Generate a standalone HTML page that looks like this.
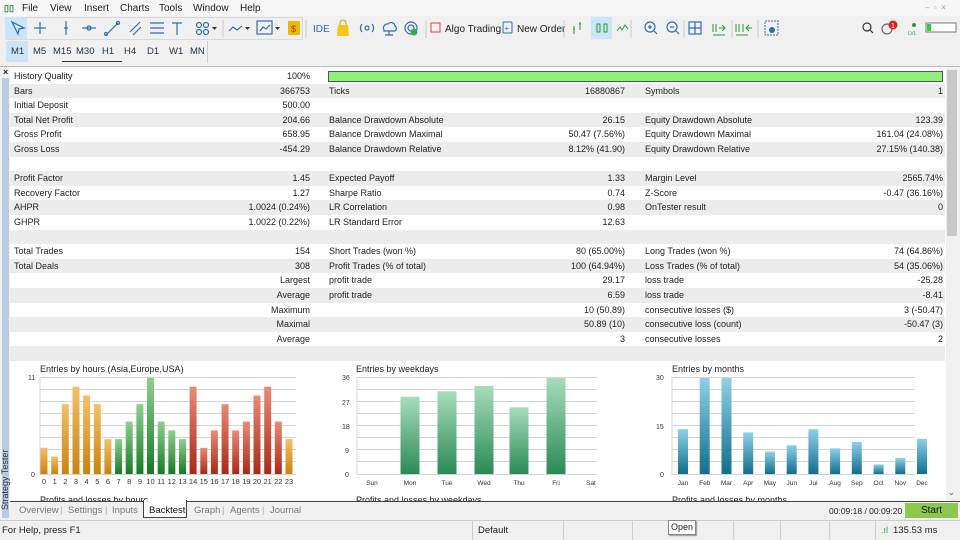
<!DOCTYPE html>
<html><head><meta charset="utf-8"><style>
*{margin:0;padding:0;box-sizing:border-box}
body{width:960px;height:540px;overflow:hidden;background:#f0f0f0;font-family:"Liberation Sans",sans-serif;font-size:9px;color:#222;position:relative}
.a{position:absolute}
.menu span{position:absolute;top:3px;font-size:10px}
.tf span{position:absolute;top:46px;font-size:9.5px;color:#234}
.row{position:absolute;left:10px;width:935px;height:14.6px;line-height:14.6px;background:#fff}
.row.g{background:#ececec}
.row span{position:absolute;white-space:nowrap}
.l1{left:4px}.v1{right:635px;text-align:right}.l2{left:319px}.v2{right:320px;text-align:right}.l3{left:635px}.v3{right:2px;text-align:right}
.tabs span{position:absolute;top:505px;font-size:9.5px;color:#777}
svg text{font-family:"Liberation Sans",sans-serif}
</style></head><body>
<div class="a" style="left:0;top:0;width:960px;height:16px;background:#f7f7f7"></div>
<div class="menu">
<span style="left:4px;color:#2a8a3a;font-weight:bold;font-size:9px">▯▯</span>
<span style="left:22px">File</span><span style="left:50px">View</span><span style="left:84px">Insert</span><span style="left:120px">Charts</span><span style="left:159px">Tools</span><span style="left:193px">Window</span><span style="left:240px">Help</span>
<span style="left:925px;color:#999;font-size:8px">–&nbsp; ▫&nbsp; ×</span>
</div>
<div class="a" style="left:6px;top:17px;width:297px;height:23px;border:1px solid #d8d8d8"></div>
<div class="a" style="left:5px;top:17px;width:22px;height:22px;background:#cce4f7"></div>
<svg class="a" style="left:0;top:16px" width="960" height="24" viewBox="0 16 960 24">
<g fill="none" stroke="#2f6db3" stroke-width="1.2">
<path d="M12 22 l6 12 l1-5 l5-1z"/>
<path d="M40 22v12M34 28h12"/>
<path d="M66 21v14M64 28h4"/>
<path d="M82 28h14"/><circle cx="89" cy="28" r="2"/>
<path d="M106 35l12-12"/><circle cx="106" cy="34" r="1.5"/><circle cx="118" cy="23" r="1.5"/>
<path d="M130 32l10-10M133 35l8-8"/>
<path d="M150 23h14M150 28h14M150 33h14"/>
<path d="M172 23h10M177 23v12"/>
<circle cx="199" cy="25" r="2.5"/><circle cx="206" cy="25" r="2.5"/><circle cx="199" cy="32" r="2.5"/><circle cx="206" cy="32" r="2.5"/>
<path d="M229 31l4-4 4 3 5-4"/>
<rect x="257" y="21" width="15" height="13"/>
<path d="M260 31l3-4 3 2 4-4"/>
</g>
<path d="M212 27h5l-2.5 3z M245 27h5l-2.5 3z M275 27h5l-2.5 3z" fill="#333"/>
<rect x="288" y="21" width="12" height="14" fill="#f2b600" rx="1"/><text x="291" y="32" font-size="9" fill="#7a5500">$</text>
<text x="313" y="32" font-size="10" fill="#2f6db3">IDE</text>
<path d="M338 25h10l1 11h-12z" fill="#f5c518"/><path d="M340 25v-2a3 3 0 0 1 6 0v2" stroke="#d19c00" fill="none"/>
<g fill="none" stroke="#2f6db3" stroke-width="1.2"><circle cx="367" cy="28" r="2"/><path d="M362 24a6 6 0 0 0 0 8M372 24a6 6 0 0 1 0 8"/>
<path d="M384 30a4 4 0 0 1 4-6a4 4 0 0 1 7 2a3 3 0 0 1 0 5h-11zM389 31v4M385 35h8"/>
<circle cx="411" cy="28" r="6"/><circle cx="411" cy="28" r="3"/></g>
<circle cx="414" cy="32" r="3.5" fill="#3aaa50"/>
<rect x="431" y="23" width="9" height="9" fill="none" stroke="#d04a4a"/>
<text x="445" y="32" font-size="10" fill="#222">Algo Trading</text>
<rect x="503" y="22" width="9" height="11" fill="none" stroke="#2f6db3" rx="1"/><text x="504.5" y="31" font-size="8" fill="#2f6db3">+</text>
<text x="517" y="32" font-size="10" fill="#222">New Order</text>
<path d="M574 34v-8M573 29h2M580 30v-8M579 24h2" stroke="#2a9a3a"/>
<rect x="591" y="17" width="21" height="22" fill="#cce4f7"/>
<path d="M597 24h3v8h-3zM604 24h3v8h-3z" stroke="#2a9a3a" fill="none"/>
<path d="M617 31l3-4 2 3 3-5 3 4" stroke="#2a9a3a" fill="none"/>
<g fill="none" stroke="#2f6db3" stroke-width="1.2"><circle cx="650" cy="27" r="5"/><path d="M654 31l3 3M648 27h4M650 25v4"/>
<circle cx="672" cy="27" r="5"/><path d="M676 31l3 3M670 27h4"/>
<rect x="689" y="22" width="12" height="12"/><path d="M695 22v12M689 28h12"/></g>
<path d="M713 24v8M716 24v8M719 28h6M722 25l3 3-3 3M713 35h12" stroke="#2a9a3a" fill="none"/>
<path d="M736 24v8M739 24v8M743 24v8M752 28h-6M749 25l-3 3 3 3M736 35h12" stroke="#2a9a3a" fill="none"/>
<rect x="765" y="21" width="13" height="14" fill="none" stroke="#2f6db3" stroke-dasharray="2 1"/><circle cx="772" cy="30" r="3" fill="#2f6db3"/>
<path d="M564 20v18M631 20v18M684 20v18M732 20v18M758 20v18M306 20v18M426 20v18M223 20v18" stroke="#ccc"/>
<circle cx="867" cy="27" r="4" fill="none" stroke="#333" stroke-width="1.2"/><path d="M870 30l3 3" stroke="#333" stroke-width="1.2"/>
<circle cx="887" cy="29" r="5" fill="none" stroke="#555"/><circle cx="893" cy="25" r="4.5" fill="#d22"/><text x="891" y="28" font-size="7" fill="#fff">1</text>
<text x="908" y="35" font-size="5" fill="#2a9a3a">LVL</text><circle cx="914" cy="25" r="2" fill="#2a9a3a"/>
<rect x="926" y="23" width="30" height="9" fill="#fff" stroke="#777"/><rect x="927" y="24" width="4" height="7" fill="#3c3"/>
</svg>
<div class="a" style="left:6px;top:41px;width:202px;height:22px;border-right:1px solid #ccc"></div>
<div class="a" style="left:6px;top:41px;width:22px;height:21px;background:#cce4f7"></div>
<div class="a" style="left:62px;top:61px;width:60px;height:1px;background:#333"></div>
<div class="tf"><span style="left:11px">M1</span><span style="left:33px">M5</span><span style="left:53px">M15</span><span style="left:76px">M30</span><span style="left:102px">H1</span><span style="left:124px">H4</span><span style="left:147px">D1</span><span style="left:169px">W1</span><span style="left:190px">MN</span></div>
<div class="a" style="left:0;top:66px;width:960px;height:1px;background:#bbb"></div>
<div class="a" style="left:0;top:67px;width:10px;height:453px;background:#f0f0f0"></div>
<div class="a" style="left:2px;top:78px;width:7px;height:440px;background:#b8cde4"></div>
<div class="a" style="left:3px;top:67px;font-size:9px;font-weight:bold">×</div>
<div class="a" style="left:-30px;top:470px;width:70px;transform:rotate(-90deg);font-size:9px;color:#333">Strategy Tester</div>
<div class="a" style="left:10px;top:67px;width:936px;height:435px;background:#fff"></div>
<div class="row" style="top:69px"><span class="l1">History Quality</span><span class="v1">100%</span><span class="a" style="left:318px;top:2px;width:615px;height:11px;background:#8ff07a;border:1px solid #555"></span></div>
<div class="row g" style="top:83.6px"><span class="l1">Bars</span><span class="v1">366753</span><span class="l2">Ticks</span><span class="v2">16880867</span><span class="l3">Symbols</span><span class="v3">1</span></div>
<div class="row" style="top:98.2px"><span class="l1">Initial Deposit</span><span class="v1">500.00</span></div>
<div class="row g" style="top:112.8px"><span class="l1">Total Net Profit</span><span class="v1">204.66</span><span class="l2">Balance Drawdown Absolute</span><span class="v2">26.15</span><span class="l3">Equity Drawdown Absolute</span><span class="v3">123.39</span></div>
<div class="row" style="top:127.4px"><span class="l1">Gross Profit</span><span class="v1">658.95</span><span class="l2">Balance Drawdown Maximal</span><span class="v2">50.47 (7.56%)</span><span class="l3">Equity Drawdown Maximal</span><span class="v3">161.04 (24.08%)</span></div>
<div class="row g" style="top:142px"><span class="l1">Gross Loss</span><span class="v1">-454.29</span><span class="l2">Balance Drawdown Relative</span><span class="v2">8.12% (41.90)</span><span class="l3">Equity Drawdown Relative</span><span class="v3">27.15% (140.38)</span></div>
<div class="row" style="top:156.6px"></div>
<div class="row g" style="top:171.2px"><span class="l1">Profit Factor</span><span class="v1">1.45</span><span class="l2">Expected Payoff</span><span class="v2">1.33</span><span class="l3">Margin Level</span><span class="v3">2565.74%</span></div>
<div class="row" style="top:185.8px"><span class="l1">Recovery Factor</span><span class="v1">1.27</span><span class="l2">Sharpe Ratio</span><span class="v2">0.74</span><span class="l3">Z-Score</span><span class="v3">-0.47 (36.16%)</span></div>
<div class="row g" style="top:200.4px"><span class="l1">AHPR</span><span class="v1">1.0024 (0.24%)</span><span class="l2">LR Correlation</span><span class="v2">0.98</span><span class="l3">OnTester result</span><span class="v3">0</span></div>
<div class="row" style="top:215px"><span class="l1">GHPR</span><span class="v1">1.0022 (0.22%)</span><span class="l2">LR Standard Error</span><span class="v2">12.63</span></div>
<div class="row g" style="top:229.6px"></div>
<div class="row" style="top:244.2px"><span class="l1">Total Trades</span><span class="v1">154</span><span class="l2">Short Trades (won %)</span><span class="v2">80 (65.00%)</span><span class="l3">Long Trades (won %)</span><span class="v3">74 (64.86%)</span></div>
<div class="row g" style="top:258.8px"><span class="l1">Total Deals</span><span class="v1">308</span><span class="l2">Profit Trades (% of total)</span><span class="v2">100 (64.94%)</span><span class="l3">Loss Trades (% of total)</span><span class="v3">54 (35.06%)</span></div>
<div class="row" style="top:273.4px"><span class="v1">Largest</span><span class="l2">profit trade</span><span class="v2">29.17</span><span class="l3">loss trade</span><span class="v3">-25.28</span></div>
<div class="row g" style="top:288px"><span class="v1">Average</span><span class="l2">profit trade</span><span class="v2">6.59</span><span class="l3">loss trade</span><span class="v3">-8.41</span></div>
<div class="row" style="top:302.6px"><span class="v1">Maximum</span><span class="v2">10 (50.89)</span><span class="l3">consecutive losses ($)</span><span class="v3">3 (-50.47)</span></div>
<div class="row g" style="top:317.2px"><span class="v1">Maximal</span><span class="v2">50.89 (10)</span><span class="l3">consecutive loss (count)</span><span class="v3">-50.47 (3)</span></div>
<div class="row" style="top:331.8px"><span class="v1">Average</span><span class="v2">3</span><span class="l3">consecutive losses</span><span class="v3">2</span></div>
<div class="row g" style="top:346.4px"></div>
<div class="a" style="left:946px;top:67px;width:14px;height:435px;background:#f0f0f0"></div>
<div class="a" style="left:947px;top:70px;width:10px;height:166px;background:#c8c8c8"></div>
<div class="a" style="left:948px;top:488px;font-size:8px;color:#555">⌄</div>
<svg class="a" style="left:0;top:360px" width="946" height="142" viewBox="0 360 946 142">
<defs>
<linearGradient id="or" x1="0" y1="0" x2="0" y2="1"><stop offset="0" stop-color="#f3c06a"/><stop offset="1" stop-color="#c8830f"/></linearGradient>
<linearGradient id="gr" x1="0" y1="0" x2="0" y2="1"><stop offset="0" stop-color="#8fd08f"/><stop offset="1" stop-color="#167a25"/></linearGradient>
<linearGradient id="rd" x1="0" y1="0" x2="0" y2="1"><stop offset="0" stop-color="#ea8a78"/><stop offset="1" stop-color="#a82a16"/></linearGradient>
<linearGradient id="wg" x1="0" y1="0" x2="0" y2="1"><stop offset="0" stop-color="#a8dcbc"/><stop offset="1" stop-color="#2a8a55"/></linearGradient>
<linearGradient id="bl" x1="0" y1="0" x2="0" y2="1"><stop offset="0" stop-color="#8fd0e6"/><stop offset="1" stop-color="#106e8e"/></linearGradient>
</defs>
<g stroke="#d4d4d4" stroke-width="1">
<path d="M40 377.5h256M40 389.5h256M40 401.5h256M40 413.5h256M40 425.5h256M40 437.5h256M40 449.5h256M40 461.5h256M40 474.5h256"/>
<path d="M357 377.5h240M357 389.5h240M357 401.5h240M357 413.5h240M357 425.5h240M357 437.5h240M357 449.5h240M357 461.5h240M357 474.5h240"/>
<path d="M672 377.5h243M672 389.5h243M672 401.5h243M672 413.5h243M672 425.5h243M672 437.5h243M672 449.5h243M672 461.5h243M672 474.5h243"/>
<path d="M40 377v98M357 377v98M672 377v98"/>
</g>
<text x="40" y="372" font-size="9" fill="#222">Entries by hours (Asia,Europe,USA)</text>
<text x="356" y="372" font-size="9" fill="#222">Entries by weekdays</text>
<text x="672" y="372" font-size="9" fill="#222">Entries by months</text>
<g font-size="7" fill="#333">
<text x="28" y="380">11</text><text x="31" y="477">0</text>
<text x="342" y="380">36</text><text x="342" y="405">27</text><text x="342" y="429">18</text><text x="345" y="453">9</text><text x="345" y="477">0</text>
<text x="656" y="380">30</text><text x="656" y="429">15</text><text x="660" y="477">0</text>
</g>
<g>
<rect x="40.5" y="447.8" width="7" height="26.2" fill="url(#or)"/>
<rect x="51.2" y="456.5" width="7" height="17.5" fill="url(#or)"/>
<rect x="61.8" y="404.2" width="7" height="69.8" fill="url(#or)"/>
<rect x="72.5" y="386.7" width="7" height="87.3" fill="url(#or)"/>
<rect x="83.1" y="395.5" width="7" height="78.5" fill="url(#or)"/>
<rect x="93.8" y="404.2" width="7" height="69.8" fill="url(#or)"/>
<rect x="104.4" y="439.1" width="7" height="34.9" fill="url(#or)"/>
<rect x="115.1" y="439.1" width="7" height="34.9" fill="url(#gr)"/>
<rect x="125.7" y="421.6" width="7" height="52.4" fill="url(#gr)"/>
<rect x="136.4" y="404.2" width="7" height="69.8" fill="url(#gr)"/>
<rect x="147" y="378" width="7" height="96" fill="url(#gr)"/>
<rect x="157.7" y="421.6" width="7" height="52.4" fill="url(#gr)"/>
<rect x="168.3" y="430.4" width="7" height="43.6" fill="url(#gr)"/>
<rect x="179" y="439.1" width="7" height="34.9" fill="url(#gr)"/>
<rect x="189.6" y="386.7" width="7" height="87.3" fill="url(#rd)"/>
<rect x="200.3" y="447.8" width="7" height="26.2" fill="url(#rd)"/>
<rect x="210.9" y="430.4" width="7" height="43.6" fill="url(#rd)"/>
<rect x="221.6" y="404.2" width="7" height="69.8" fill="url(#rd)"/>
<rect x="232.2" y="430.4" width="7" height="43.6" fill="url(#rd)"/>
<rect x="242.9" y="421.6" width="7" height="52.4" fill="url(#rd)"/>
<rect x="253.5" y="395.5" width="7" height="78.5" fill="url(#rd)"/>
<rect x="264.2" y="386.7" width="7" height="87.3" fill="url(#rd)"/>
<rect x="274.8" y="421.6" width="7" height="52.4" fill="url(#rd)"/>
<rect x="285.5" y="439.1" width="7" height="34.9" fill="url(#or)"/>
</g>
<g font-size="7.5" fill="#333" text-anchor="middle">
<text x="44" y="484">0</text><text x="54.7" y="484">1</text><text x="65.3" y="484">2</text><text x="76" y="484">3</text><text x="86.6" y="484">4</text><text x="97.3" y="484">5</text><text x="107.9" y="484">6</text><text x="118.6" y="484">7</text><text x="129.2" y="484">8</text><text x="139.9" y="484">9</text><text x="150.5" y="484">10</text><text x="161.2" y="484">11</text><text x="171.8" y="484">12</text><text x="182.5" y="484">13</text><text x="193.1" y="484">14</text><text x="203.8" y="484">15</text><text x="214.4" y="484">16</text><text x="225.1" y="484">17</text><text x="235.7" y="484">18</text><text x="246.4" y="484">19</text><text x="257" y="484">20</text><text x="267.7" y="484">21</text><text x="278.3" y="484">22</text><text x="289" y="484">23</text>
</g>
<g fill="url(#wg)">
<rect x="400.5" y="396.7" width="19" height="77.3"/><rect x="437.5" y="391.3" width="19" height="82.7"/><rect x="474.5" y="386" width="19" height="88"/><rect x="509.5" y="407.3" width="19" height="66.7"/><rect x="546.5" y="378" width="19" height="96"/>
</g>
<g font-size="6.5" fill="#333" text-anchor="middle">
<text x="372" y="485">Sun</text><text x="410" y="485">Mon</text><text x="447" y="485">Tue</text><text x="484" y="485">Wed</text><text x="519" y="485">Thu</text><text x="556" y="485">Fri</text><text x="591" y="485">Sat</text>
</g>
<g fill="url(#bl)">
<rect x="678" y="429.2" width="10" height="44.8"/><rect x="699.7" y="378" width="10" height="96"/><rect x="721.5" y="378" width="10" height="96"/><rect x="743.2" y="432.4" width="10" height="41.6"/><rect x="764.9" y="451.6" width="10" height="22.4"/><rect x="786.7" y="445.2" width="10" height="28.8"/><rect x="808.4" y="429.2" width="10" height="44.8"/><rect x="830.1" y="448.4" width="10" height="25.6"/><rect x="851.8" y="442" width="10" height="32"/><rect x="873.6" y="464.4" width="10" height="9.6"/><rect x="895.3" y="458" width="10" height="16"/><rect x="917" y="438.8" width="10" height="35.2"/>
</g>
<g font-size="6.5" fill="#333" text-anchor="middle">
<text x="683" y="485">Jan</text><text x="704.7" y="485">Feb</text><text x="726.5" y="485">Mar</text><text x="748.2" y="485">Apr</text><text x="769.9" y="485">May</text><text x="791.7" y="485">Jun</text><text x="813.4" y="485">Jul</text><text x="835.1" y="485">Aug</text><text x="856.8" y="485">Sep</text><text x="878.6" y="485">Oct</text><text x="900.3" y="485">Nov</text><text x="922" y="485">Dec</text>
</g>
<g font-size="9" fill="#222"><text x="40" y="503">Profits and losses by hours</text><text x="356" y="503">Profits and losses by weekdays</text><text x="672" y="503">Profits and losses by months</text></g>
</svg>
<div class="a" style="left:10px;top:501px;width:950px;height:19px;background:#f0f0f0;border-top:1px solid #444"></div>
<div class="a" style="left:143px;top:500px;width:44px;height:18px;background:#fff;border:1px solid #444;border-top:none"></div>
<div class="tabs"><span style="left:19px">Overview</span><span style="left:60px;color:#aaa">|</span><span style="left:68px">Settings</span><span style="left:105px;color:#aaa">|</span><span style="left:112px">Inputs</span><span style="left:149px;color:#111">Backtest</span><span style="left:194px">Graph</span><span style="left:222px;color:#aaa">|</span><span style="left:230px">Agents</span><span style="left:262px;color:#aaa">|</span><span style="left:270px">Journal</span>
<span style="left:829px;color:#222;font-size:8.5px;top:506px">00:09:18 / 00:09:20</span></div>
<div class="a" style="left:905px;top:503px;width:53px;height:15px;background:#8cc84b;color:#113;font-size:10px;text-align:center;line-height:15px">Start</div>
<div class="a" style="left:0;top:520px;width:960px;height:20px;background:#f0f0f0;border-top:1px solid #ccc"></div>
<div class="a" style="left:2px;top:525px;font-size:9.5px">For Help, press F1</div>
<div class="a" style="left:472px;top:521px;width:1px;height:19px;background:#ccc"></div>
<div class="a" style="left:478px;top:525px;font-size:9.5px">Default</div>
<div class="a" style="left:563px;top:521px;width:1px;height:19px;background:#ccc"></div>
<div class="a" style="left:632px;top:521px;width:1px;height:19px;background:#ccc"></div>
<div class="a" style="left:733px;top:521px;width:1px;height:19px;background:#ccc"></div>
<div class="a" style="left:780px;top:521px;width:1px;height:19px;background:#ccc"></div>
<div class="a" style="left:829px;top:521px;width:1px;height:19px;background:#ccc"></div>
<div class="a" style="left:875px;top:521px;width:1px;height:19px;background:#ccc"></div>
<div class="a" style="left:668px;top:520px;width:28px;height:15px;background:#fff;border:1px solid #888;font-size:9px;line-height:13px;text-align:center;box-shadow:1px 1px 1px #999">Open</div>
<div class="a" style="left:881px;top:525px;font-size:9px;color:#3a3">.ıl</div>
<div class="a" style="left:893px;top:525px;font-size:9.5px">135.53 ms</div>
</body></html>
